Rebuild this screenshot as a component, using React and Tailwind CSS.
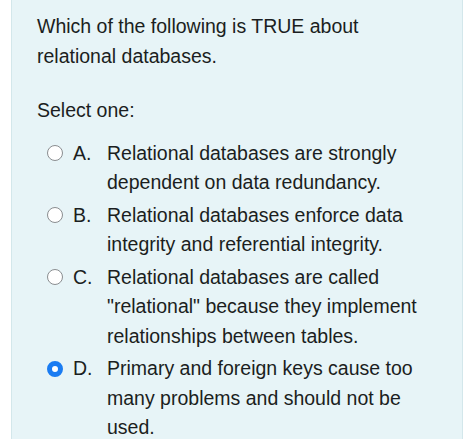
const OPTIONS = [
  { letter: 'A.', text: 'Relational databases are strongly dependent on data redundancy.' },
  { letter: 'B.', text: 'Relational databases enforce data integrity and referential integrity.' },
  { letter: 'C.', text: 'Relational databases are called "relational" because they implement relationships between tables.' },
  { letter: 'D.', text: 'Primary and foreign keys cause too many problems and should not be used.', checked: true },
];

function Radio({ checked }) {
  if (checked) {
    return <span className="block h-4 w-4 rounded-full border-[5px] border-[#1a7cf2] bg-white" />;
  }
  return <span className="block h-4 w-4 rounded-full border-[1.5px] border-[#8a8d90] bg-white" />;
}

export default function App() {
  return (
    <div className="h-[439px] overflow-hidden bg-white font-['Liberation_Sans',Arial,sans-serif] text-[19.5px] leading-[29.5px] text-[#1b1e21]">
      <div className="ml-[11px] h-[460px] w-[452px] border-x border-[#d3e7eb] bg-[#e7f4f7] pl-[25px] pr-[32px] pt-[12px]">
        <p>Which of the following is TRUE about relational databases.</p>
        <p className="mt-[25px]">Select one:</p>
        <div className="mt-[13px] space-y-[3px]">
          {OPTIONS.map((opt) => (
            <div key={opt.letter} className="flex">
              <div className="flex h-[29.5px] w-[36px] shrink-0 items-center pl-[10px]">
                <Radio checked={opt.checked} />
              </div>
              <span className="w-[34px] shrink-0">{opt.letter}</span>
              <span>{opt.text}</span>
            </div>
          ))}
        </div>
      </div>
    </div>
  );
}
